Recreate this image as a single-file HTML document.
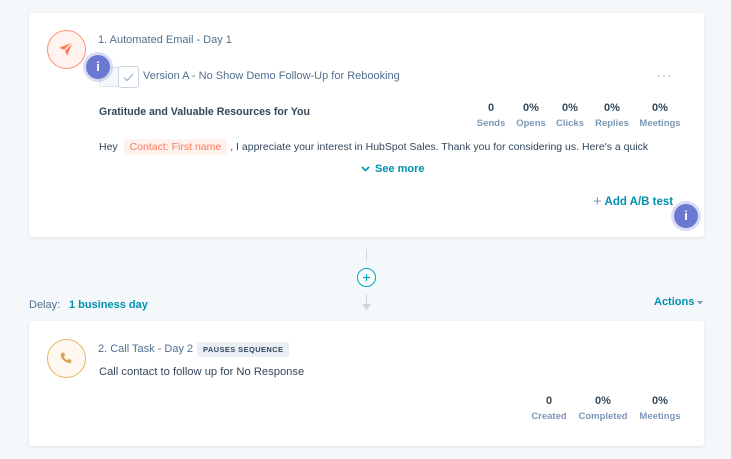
<!DOCTYPE html>
<html><head><meta charset="utf-8"><style>
*{margin:0;padding:0;box-sizing:border-box}
body{width:731px;height:459px;background:#f5f8fa;font-family:"Liberation Sans",sans-serif;position:relative;overflow:hidden;color:#33475b}
.card{position:absolute;left:29px;width:675px;background:#fff;border-radius:3px;box-shadow:0 1px 3px rgba(45,62,80,.12)}
.abs{position:absolute;white-space:nowrap}
.stat{position:absolute;text-align:center;white-space:nowrap}
.stat b{display:block;font-size:11px;color:#33475b}
.stat span{display:block;font-size:9.5px;color:#7c98b6;font-weight:bold;margin-top:4px}
.info{position:absolute;width:24px;height:24px;border-radius:50%;background:#6a78d1;color:#fff;font-size:13px;font-weight:bold;text-align:center;line-height:24px;box-shadow:0 0 0 3px rgba(106,120,209,.25)}
</style></head><body>
<div class="card" style="top:13px;height:224px"></div>
<div class="card" style="top:321px;height:125px"></div>

<div class="abs" style="left:47px;top:30px;width:39px;height:39px;border-radius:50%;border:1px solid #ff8f73;background:#fff3f0"></div>
<svg class="abs" style="left:57px;top:40px" width="18" height="18" viewBox="0 0 16 16"><path d="M14 2 L2 7 L7 9 L9 14 Z" fill="#ff7a59"/><path d="M14 2 L7 9" stroke="#fff3f0" stroke-width="1.2"/></svg>
<div class="abs" style="left:98px;top:34px;font-size:11px;color:#516f90">1. Automated Email - Day 1</div>
<div class="abs" style="left:99px;top:67px;width:40px;height:20px;border:1px solid #dfe3eb;border-radius:3px;background:#f5f8fa"></div>
<div class="abs" style="left:118px;top:66px;width:21px;height:22px;border:1px solid #cbd6e2;border-radius:3px;background:#fff"></div>
<svg class="abs" style="left:123px;top:73px" width="11" height="9" viewBox="0 0 11 9"><path d="M1 4.5 L4 7.5 L10 1" stroke="#9fb0c3" stroke-width="1.2" fill="none"/></svg>
<div class="info" style="left:86px;top:55px">i</div>
<div class="abs" style="left:143px;top:70px;font-size:11px;color:#516f90">Version A - No Show Demo Follow-Up for Rebooking</div>
<div class="abs" style="left:657px;top:68px;font-size:12px;color:#7c98b6;letter-spacing:1px">···</div>
<div class="abs" style="left:99px;top:106px;font-size:10.6px;font-weight:bold;color:#33475b">Gratitude and Valuable Resources for You</div>
<div class="stat" style="left:476px;top:102px;width:30px"><b>0</b><span>Sends</span></div>
<div class="stat" style="left:513px;top:102px;width:36px"><b>0%</b><span>Opens</span></div>
<div class="stat" style="left:553px;top:102px;width:34px"><b>0%</b><span>Clicks</span></div>
<div class="stat" style="left:592px;top:102px;width:40px"><b>0%</b><span>Replies</span></div>
<div class="stat" style="left:636px;top:102px;width:48px"><b>0%</b><span>Meetings</span></div>
<div class="abs" style="left:99px;top:139px;font-size:10.5px;color:#33475b">Hey <span style="display:inline-block;background:#fff1ee;color:#ff7a59;padding:2px 6px;margin:0 3px">Contact: First name</span>, I appreciate your interest in HubSpot Sales. Thank you for considering us. Here's a quick</div>
<svg class="abs" style="left:361px;top:166px" width="9" height="6" viewBox="0 0 9 6"><path d="M1 1 L4.5 4.5 L8 1" stroke="#0091ae" stroke-width="1.6" fill="none"/></svg>
<div class="abs" style="left:375px;top:163px;font-size:11px;font-weight:bold;color:#0091ae">See more</div>
<div class="abs" style="left:593px;top:193px;font-size:11.5px;font-weight:bold;color:#0091ae"><span style="color:#7c98b6;font-weight:normal;font-size:15px;vertical-align:-1px">+</span> Add A/B test</div>
<div class="info" style="left:674px;top:204px">i</div>

<div class="abs" style="left:366px;top:249px;width:1px;height:12px;background:#cbd6e2"></div>
<div class="abs" style="left:357px;top:268px;width:19px;height:19px;border-radius:50%;border:1px solid #00a4bd;background:#fff"></div>
<svg class="abs" style="left:362px;top:273px" width="9" height="9" viewBox="0 0 9 9"><path d="M4.5 1V8M1 4.5H8" stroke="#00a4bd" stroke-width="1.2"/></svg>
<div class="abs" style="left:366px;top:294px;width:1px;height:10px;background:#cbd6e2"></div>
<svg class="abs" style="left:362px;top:304px" width="9" height="6"><path d="M0 0H9L4.5 6Z" fill="#cbd6e2"/></svg>
<div class="abs" style="left:29px;top:299px;font-size:11px;color:#516f90">Delay:</div>
<div class="abs" style="left:69px;top:299px;font-size:11px;font-weight:bold;color:#0091ae">1 business day</div>
<div class="abs" style="left:654px;top:296px;font-size:11px;font-weight:bold;color:#0091ae">Actions</div>
<svg class="abs" style="left:697px;top:301px" width="6" height="4"><path d="M0 0H6L3 3.5Z" fill="#7c98b6"/></svg>

<div class="abs" style="left:47px;top:339px;width:39px;height:39px;border-radius:50%;border:1px solid #e8b462;background:#fef8f0"></div>
<svg class="abs" style="left:59px;top:351px" width="14" height="14" viewBox="0 0 12 12"><path d="M2.5 1.5 L4.5 1.5 L5.3 3.8 L4.2 4.8 Q5.3 7 7.2 7.9 L8.2 6.8 L10.5 7.6 L10.5 9.6 Q10.5 10.5 9.5 10.5 Q5 10 2 6 Q1.5 4.5 1.5 2.5 Q1.5 1.5 2.5 1.5Z" fill="#dba55a"/></svg>
<div class="abs" style="left:98px;top:343px;font-size:11px;color:#516f90">2. Call Task - Day 2</div>
<div class="abs" style="left:197px;top:342px;height:15px;padding:0 6px;background:#eaf0f6;border-radius:2px;font-size:7.5px;font-weight:bold;color:#33475b;line-height:15px;letter-spacing:.4px">PAUSES SEQUENCE</div>
<div class="abs" style="left:99px;top:366px;font-size:11.2px;color:#33475b">Call contact to follow up for No Response</div>
<div class="stat" style="left:529px;top:395px;width:40px"><b>0</b><span>Created</span></div>
<div class="stat" style="left:577px;top:395px;width:52px"><b>0%</b><span>Completed</span></div>
<div class="stat" style="left:637px;top:395px;width:46px"><b>0%</b><span>Meetings</span></div>
</body></html>
